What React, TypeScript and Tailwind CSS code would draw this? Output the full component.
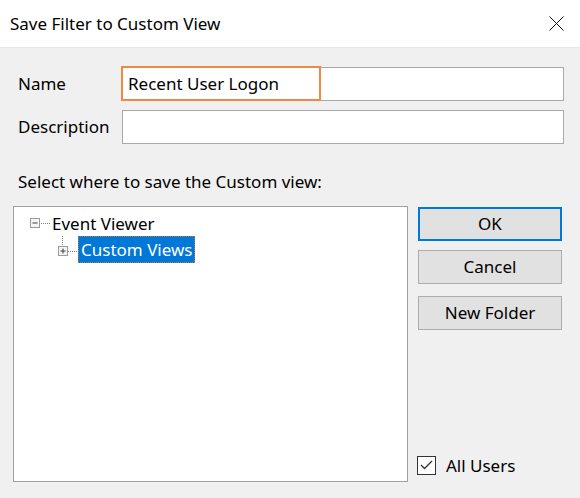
import React from 'react';

const FONT = { fontFamily: '"Noto Sans", "Open Sans", sans-serif' };

function MinusBox() {
  return (
    <svg width="22" height="25" viewBox="0 0 22 25" className="shrink-0">
      <rect x="0.5" y="7.5" width="9" height="9" fill="#f4f4f4" stroke="#9a9a9a" />
      <path d="M2.5 12H7.5" stroke="#3c3c3c" strokeWidth="1" />
      <path d="M11 12.5H21" stroke="#808080" strokeWidth="1" strokeDasharray="1 1" />
    </svg>
  );
}

function PlusTee() {
  return (
    <svg width="48" height="27" viewBox="0 0 48 27" className="shrink-0">
      <path d="M32.5 0V10" stroke="#808080" strokeWidth="1" strokeDasharray="1 1" />
      <rect x="28.5" y="10.5" width="9" height="9" fill="#f4f4f4" stroke="#9a9a9a" />
      <path d="M30.5 15H35.5" stroke="#3c3c3c" strokeWidth="1" />
      <path d="M33 12.5V17.5" stroke="#3c3c3c" strokeWidth="1" />
      <path d="M38 15.5H48" stroke="#808080" strokeWidth="1" strokeDasharray="1 1" />
    </svg>
  );
}

function DialogButton({ label, primary }: { label: string; primary?: boolean }) {
  return (
    <button
      type="button"
      className={`w-[144px] h-[34px] bg-[#e1e1e1] text-[17px] leading-[22px] text-black ${
        primary ? 'border-2 border-[#0078d7]' : 'border border-[#adadad]'
      }`}
    >
      {label}
    </button>
  );
}

export default function App() {
  return (
    <div className="w-[580px] h-[498px] bg-[#f0f0f0] flex flex-col text-black" style={FONT}>
      {/* Title bar */}
      <div className="h-[48px] bg-white flex items-center justify-between pl-[10px] pr-[16px] border-b border-[#e6e6e6]">
        <span className="text-[17px] leading-[22px]">Save Filter to Custom View</span>
        <svg width="15" height="15" viewBox="0 0 15 15">
          <path d="M0.5 0.5L14.5 14.5M14.5 0.5L0.5 14.5" stroke="#111" strokeWidth="1" />
        </svg>
      </div>

      {/* Body */}
      <div className="flex flex-col pl-[18px] pr-[16px] pt-[19px] text-[17px] leading-[22px]">
        <div className="flex items-center">
          <span className="w-[104px]">Name</span>
          <div className="relative w-[442px] h-[34px] bg-white border border-[#a9a9a9] flex items-center pl-[5px]">
            Recent User Logon
            <div className="absolute -left-[2px] -top-[2px] w-[200px] h-[35px] border-2 border-[#ee8a45]" />
          </div>
        </div>
        <div className="flex items-center mt-[9px]">
          <span className="w-[104px]">Description</span>
          <div className="w-[442px] h-[34px] bg-white border border-[#a9a9a9]" />
        </div>
        <div className="mt-[27px]">Select where to save the Custom view:</div>
      </div>

      <div className="flex pl-[13px] pt-[13px]">
        {/* Tree */}
        <div className="w-[395px] h-[276px] bg-white border border-[#9da0a6] pt-[4px] pl-[16px] text-[17px] leading-[22px]">
          <div className="flex items-center h-[25px]">
            <MinusBox />
            <span>Event Viewer</span>
          </div>
          <div className="flex items-center h-[27px]">
            <PlusTee />
            <span className="h-[27px] bg-[#0078d7] text-white border border-dotted border-[#c07a3a] px-[2px] flex items-center">
              Custom Views
            </span>
          </div>
        </div>

        {/* Buttons */}
        <div className="flex flex-col ml-[10px] pt-[1px] w-[144px]">
          <DialogButton label="OK" primary />
          <div className="mt-[9px]">
            <DialogButton label="Cancel" />
          </div>
          <div className="mt-[12px]">
            <DialogButton label="New Folder" />
          </div>
          <div className="flex-1" />
          <div className="flex items-center mb-[4px] -ml-[1px]">
            <div className="w-[19px] h-[19px] border border-[#333] bg-white flex items-center justify-center">
              <svg width="13" height="10" viewBox="0 0 13 10">
                <path d="M1 5L4.5 8.5L12 1" stroke="#333" strokeWidth="1.3" fill="none" />
              </svg>
            </div>
            <span className="ml-[10px] text-[17px]">All Users</span>
          </div>
        </div>
      </div>
    </div>
  );
}
